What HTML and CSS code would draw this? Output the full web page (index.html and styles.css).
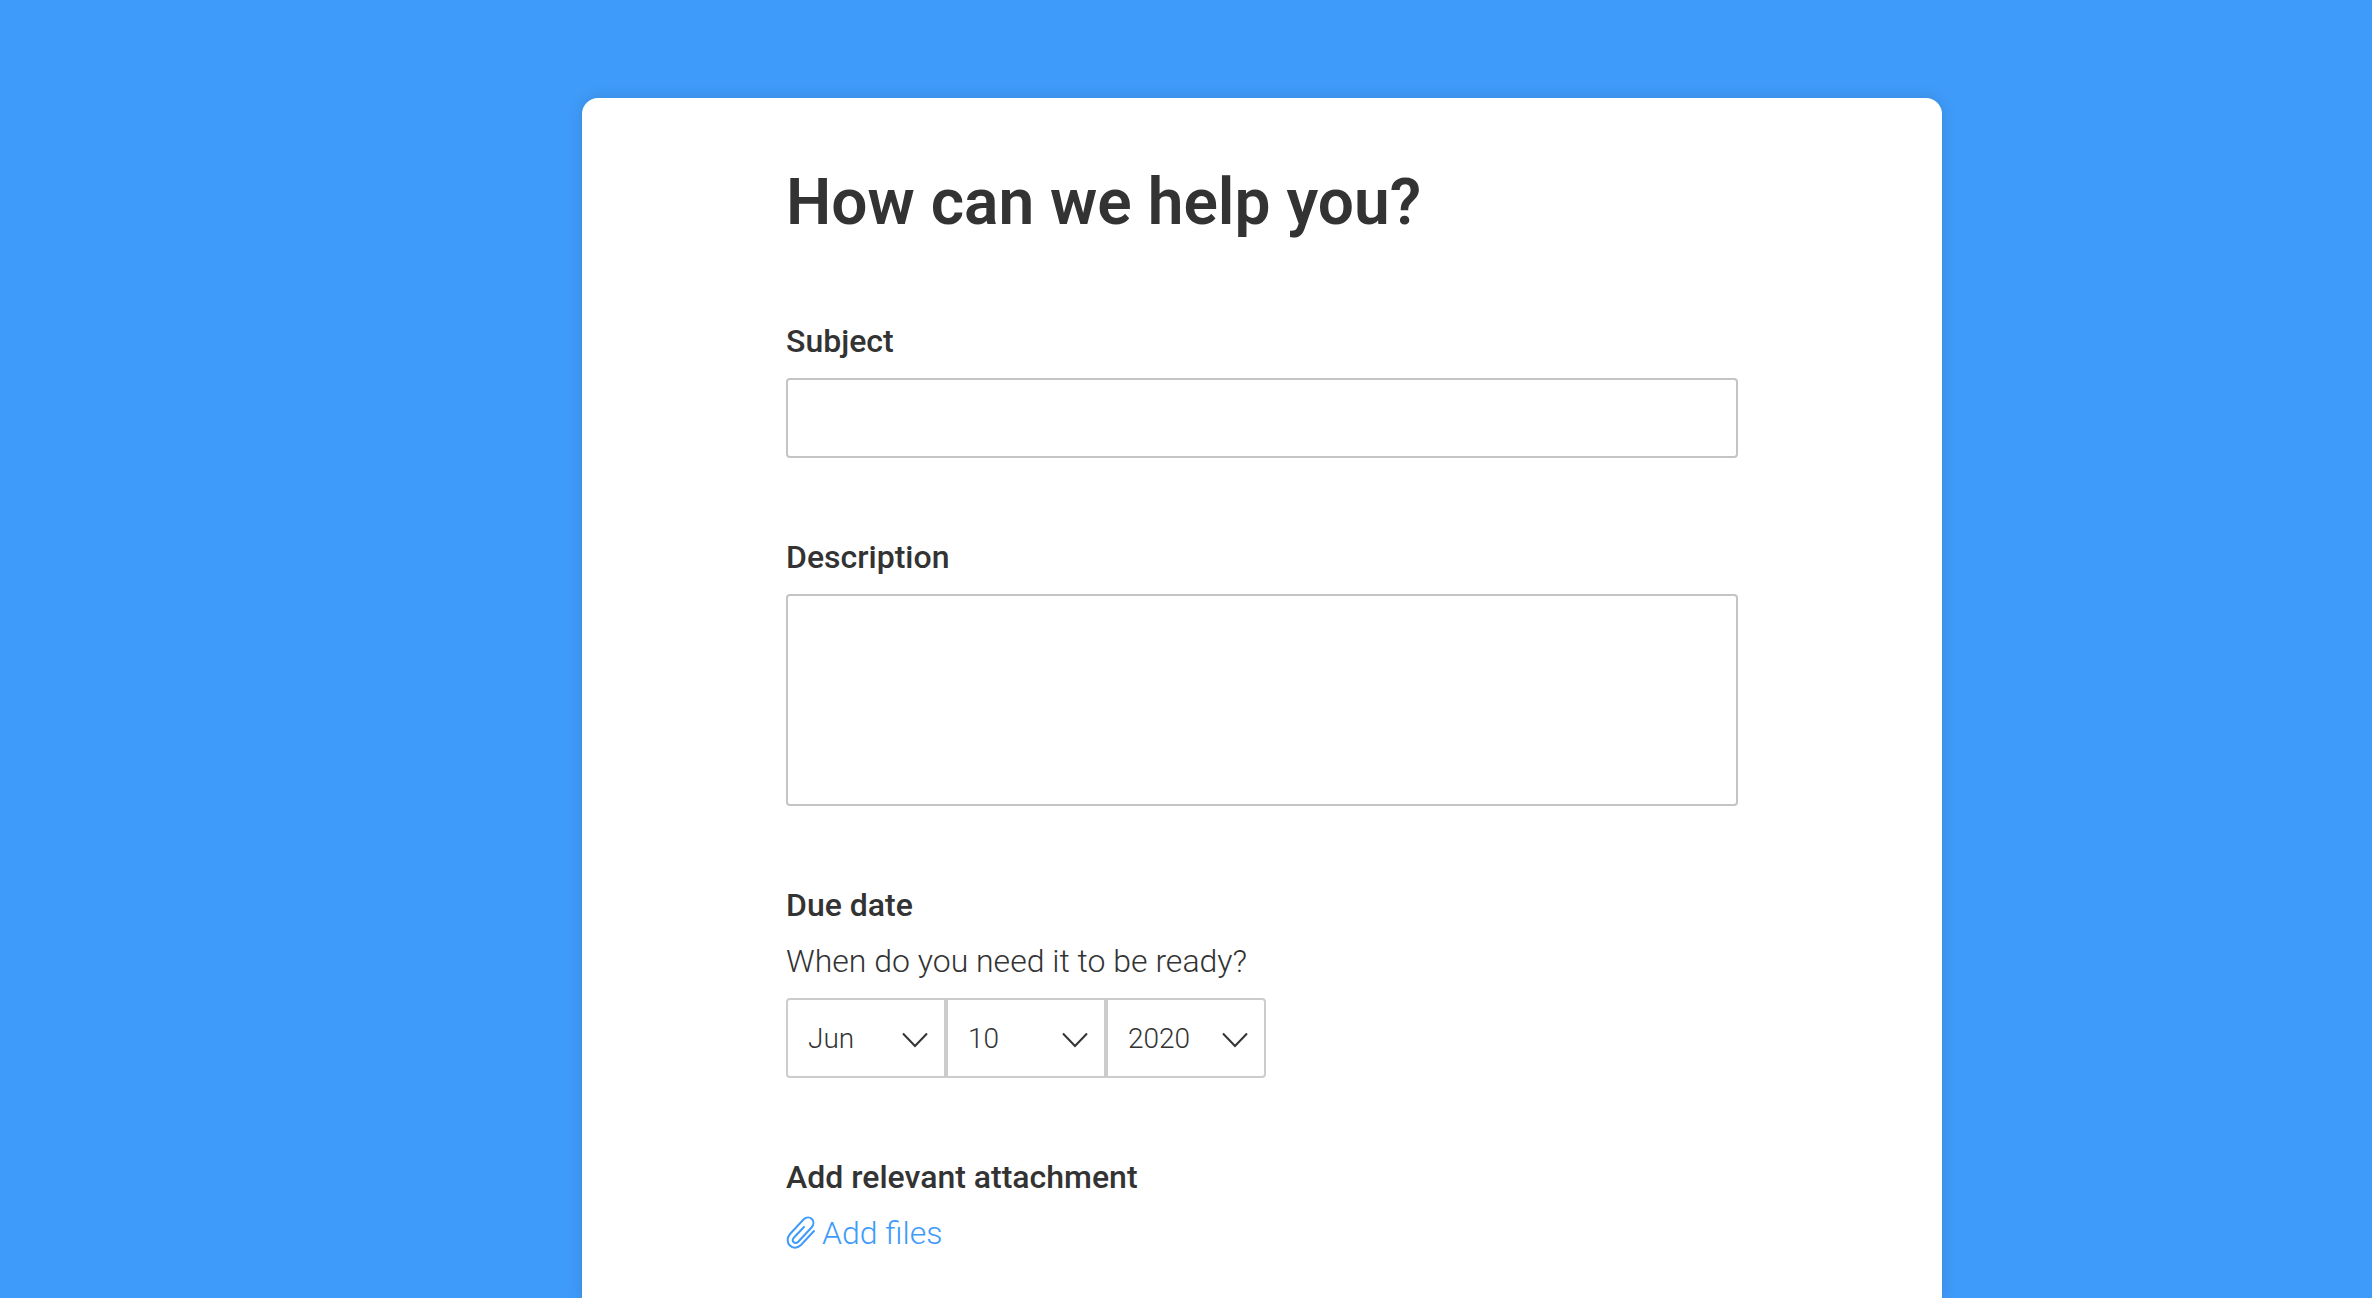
FILE: index.html
```html
<!DOCTYPE html>
<html lang="en">
<head>
<meta charset="utf-8">
<meta name="viewport" content="width=device-width, initial-scale=1">
<title>How can we help you?</title>
<link rel="stylesheet" href="styles.css">
</head>
<body>
<main class="page">
  <form class="card">
    <h1 class="title">How can we help you?</h1>
    <div class="field">
      <label class="label" for="subject">Subject</label>
      <input class="input" id="subject" type="text">
    </div>
    <div class="field">
      <label class="label" for="description">Description</label>
      <textarea class="input textarea" id="description"></textarea>
    </div>
    <div class="field" role="group" aria-labelledby="due-label" aria-describedby="due-hint">
      <span class="label" id="due-label">Due date</span>
      <span class="hint" id="due-hint">When do you need it to be ready?</span>
      <div class="date">
        <div class="picker">
          <select class="select" aria-label="Month"><option>Jun</option></select>
          <svg class="chevron" viewBox="0 0 26 16" aria-hidden="true"><path d="M1 1.5 13 14 25 1.5"/></svg>
        </div>
        <div class="picker">
          <select class="select" aria-label="Day"><option>10</option></select>
          <svg class="chevron" viewBox="0 0 26 16" aria-hidden="true"><path d="M1 1.5 13 14 25 1.5"/></svg>
        </div>
        <div class="picker">
          <select class="select" aria-label="Year"><option>2020</option></select>
          <svg class="chevron" viewBox="0 0 26 16" aria-hidden="true"><path d="M1 1.5 13 14 25 1.5"/></svg>
        </div>
      </div>
    </div>
    <div class="field">
      <span class="label">Add relevant attachment</span>
      <a class="attach" href="#files">
        <svg class="clip" viewBox="0 0 30 34" aria-hidden="true"><path d="M18 11 8 21.500C4.500 25.500 9 29 12.500 25.500L25.500 11.500C31 5 23.500-2 17.500 3.500L4 18C-3 26.500 7 36.500 15 29L28 15"/></svg>
        Add files
      </a>
    </div>
  </form>
</main>
</body>
</html>
```
FILE: styles.css
```css
* {
  box-sizing: border-box;
}

body {
  margin: 0;
  min-height: 100vh;
  background: #3f9bf9;
  color: #333;
  font: 300 32px/38px Roboto, "Liberation Sans", sans-serif;
}

.page {
  display: flex;
  justify-content: center;
  min-height: 100vh;
  padding: 98px 0 0 152px;
}

.card {
  display: flex;
  flex-direction: column;
  gap: 80px;
  width: 100%;
  max-width: 1360px;
  padding: 66px 204px 48px;
  border-radius: 16px 16px 0 0;
  background: #fff;
  box-shadow: 0 0 16px rgba(0, 0, 0, 0.12);
}

.title {
  margin: 0;
  font-size: 64px;
  font-weight: 600;
  line-height: 78px;
}

.field {
  display: flex;
  flex-direction: column;
  align-items: flex-start;
  gap: 18px;
}

.label {
  font-weight: 500;
}

.input {
  display: block;
  width: 100%;
  height: 80px;
  padding: 0 20px;
  border: 2px solid #c4c4c4;
  border-radius: 4px;
  background: #fff;
  color: inherit;
  font: inherit;
}

.textarea {
  height: 212px;
  padding: 16px 20px;
  resize: none;
}

.date {
  display: flex;
}

.picker {
  display: grid;
  align-items: center;
  width: 160px;
}

.select,
.chevron {
  grid-area: 1 / 1;
}

.select {
  appearance: none;
  width: 100%;
  height: 80px;
  padding: 2px 20px 0;
  border: 2px solid #ccc;
  border-radius: 0;
  background: #fff;
  color: inherit;
  font: inherit;
  font-size: 28px;
}

.picker:first-child .select {
  border-radius: 4px 0 0 4px;
}

.picker:last-child .select {
  border-radius: 0 4px 4px 0;
}

.chevron {
  justify-self: end;
  width: 26px;
  height: 16px;
  margin: 4px 18px 0 0;
  fill: none;
  stroke: #333;
  stroke-width: 2;
  pointer-events: none;
}

.attach {
  display: flex;
  align-items: center;
  gap: 6px;
  color: #3f9bf9;
  text-decoration: none;
}

.clip {
  width: 30px;
  height: 34px;
  fill: none;
  stroke: currentColor;
  stroke-width: 2;
  stroke-linecap: round;
}
```
